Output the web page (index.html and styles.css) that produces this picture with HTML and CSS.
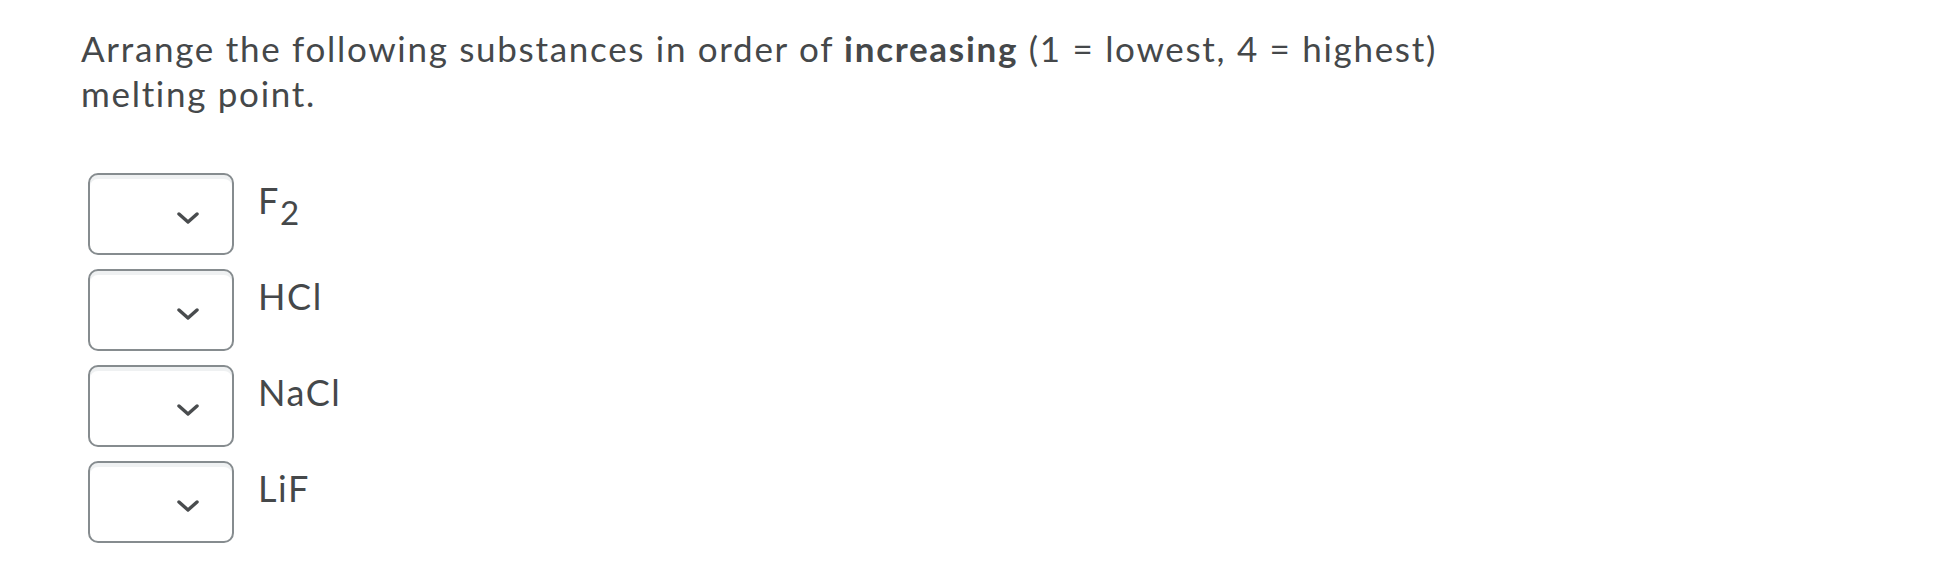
FILE: index.html
```html
<!DOCTYPE html>
<html>
<head>
<meta charset="utf-8">
<link rel="stylesheet" href="styles.css">
</head>
<body>
<div class="question">
  <p class="prompt">Arrange the following substances in order of <strong>increasing</strong> (1 = lowest, 4 = highest)<br>melting point.</p>
  <div class="options">
    <div class="row">
      <div class="select"><svg class="chev" width="22" height="12" viewBox="0 0 22 12"><path d="M2 2 L11 10 L20 2" fill="none" stroke="#494c4e" stroke-width="3.4" stroke-linecap="round" stroke-linejoin="round"/></svg></div>
      <div class="label">F<sub>2</sub></div>
    </div>
    <div class="row">
      <div class="select"><svg class="chev" width="22" height="12" viewBox="0 0 22 12"><path d="M2 2 L11 10 L20 2" fill="none" stroke="#494c4e" stroke-width="3.4" stroke-linecap="round" stroke-linejoin="round"/></svg></div>
      <div class="label">HCl</div>
    </div>
    <div class="row">
      <div class="select"><svg class="chev" width="22" height="12" viewBox="0 0 22 12"><path d="M2 2 L11 10 L20 2" fill="none" stroke="#494c4e" stroke-width="3.4" stroke-linecap="round" stroke-linejoin="round"/></svg></div>
      <div class="label">NaCl</div>
    </div>
    <div class="row">
      <div class="select"><svg class="chev" width="22" height="12" viewBox="0 0 22 12"><path d="M2 2 L11 10 L20 2" fill="none" stroke="#494c4e" stroke-width="3.4" stroke-linecap="round" stroke-linejoin="round"/></svg></div>
      <div class="label">LiF</div>
    </div>
  </div>
</div>
</body>
</html>
```
FILE: styles.css
```css
html, body {
  margin: 0;
  padding: 0;
  background: #ffffff;
}
body {
  font-family: Lato, "Open Sans", sans-serif;
  color: #45484a;
  font-variant-ligatures: none;
}
.question {
  padding: 26px 0 0 81px;
}
.prompt {
  margin: 0;
  font-size: 35px;
  line-height: 45px;
  letter-spacing: 1.7px;
}
.prompt strong {
  font-weight: 700;
}
.options {
  margin-top: 57px;
  margin-left: 7px;
  display: flex;
  flex-direction: column;
  gap: 14px;
}
.row {
  display: flex;
  align-items: flex-start;
  gap: 24px;
}
.select {
  box-sizing: border-box;
  width: 146px;
  height: 82px;
  border: 2px solid #868c8f;
  border-radius: 10px;
  background: #fff;
  box-shadow: inset 0 4px 0 0 rgba(177, 185, 190, 0.2);
  display: flex;
  align-items: center;
  justify-content: flex-end;
  padding: 7px 33px 0 0;
}
.chev {
  display: block;
}
.label {
  font-size: 36px;
  line-height: 43px;
  padding-top: 6px;
  letter-spacing: 1.6px;
}
.label sub {
  font-size: 0.92em;
  vertical-align: -0.33em;
  line-height: 0;
}
```
